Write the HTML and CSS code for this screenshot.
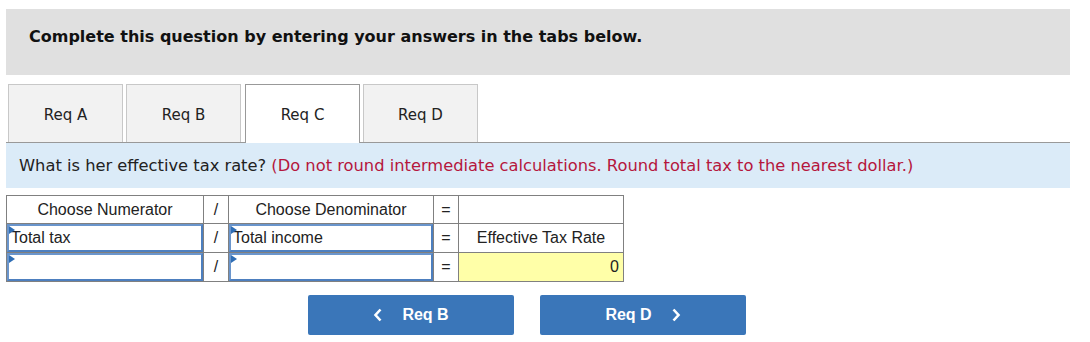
FILE: index.html
```html
<!DOCTYPE html>
<html lang="en">
<head>
    <meta charset="UTF-8">
    <title>Req C</title>
    <link rel="stylesheet" href="styles.css">
</head>
<body>
    <div class="page">
        <div class="instructions">
            <strong>Complete this question by entering your answers in the tabs below.</strong>
        </div>

        <div class="tabs">
            <div class="tab">Req A</div>
            <div class="tab">Req B</div>
            <div class="tab active">Req C</div>
            <div class="tab">Req D</div>
        </div>

        <div class="question">
            What is her effective tax rate? <span class="note">(Do not round intermediate calculations. Round total tax to the nearest dollar.)</span>
        </div>

        <!-- tabla de la razon -->
        <table class="ratio">
            <tr>
                <td class="label">Choose Numerator</td>
                <td class="op">/</td>
                <td class="label">Choose Denominator</td>
                <td class="op">=</td>
                <td class="result"></td>
            </tr>
            <tr>
                <td class="entry"><div class="field">Total tax</div></td>
                <td class="op">/</td>
                <td class="entry"><div class="field">Total income</div></td>
                <td class="op">=</td>
                <td class="result">Effective Tax Rate</td>
            </tr>
            <tr>
                <td class="entry"><div class="field"></div></td>
                <td class="op">/</td>
                <td class="entry"><div class="field"></div></td>
                <td class="op">=</td>
                <td class="result answer">0</td>
            </tr>
        </table>

        <div class="nav">
            <button class="nav-btn">
                <svg class="chev" width="10" height="14" viewBox="0 0 10 14"><polyline points="7.5,1.5 2.5,7 7.5,12.5" fill="none" stroke="#fff" stroke-width="2.6"/></svg>
                Req B
            </button>
            <button class="nav-btn">
                Req D
                <svg class="chev" width="10" height="14" viewBox="0 0 10 14"><polyline points="2.5,1.5 7.5,7 2.5,12.5" fill="none" stroke="#fff" stroke-width="2.6"/></svg>
            </button>
        </div>
    </div>
</body>
</html>
```

FILE: styles.css
```css
html, body {
    margin: 0;
    padding: 0;
    background: #fff;
    font-family: 'DejaVu Sans', Verdana, sans-serif;
    color: #111;
}

.page {
    padding: 9px 20px 0 6px;
}

.instructions {
    background: #e0e0e0;
    height: 66px;
    padding-left: 23px;
    display: flex;
    align-items: center;
    font-size: 16px;
    box-sizing: border-box;
    padding-bottom: 12px;
}

.tabs {
    display: flex;
    gap: 3px;
    margin-top: 9px;
    padding-left: 2px;
    border-bottom: 1px solid #999;
    height: 58px;
}

.tab {
    width: 115px;
    box-sizing: border-box;
    height: 58px;
    border: 1px solid #c8c8c8;
    border-bottom: none;
    background: #f2f2f2;
    display: flex;
    align-items: center;
    justify-content: center;
    padding-top: 2px;
    font-size: 15px;
    color: #222;
}

.tab.active {
    background: #fff;
    border-color: #999;
    height: 59px;
    width: 115px;
    margin-left: 1px;
}

.question {
    background: #dbebf8;
    height: 45px;
    line-height: 45px;
    padding-left: 13px;
    font-size: 16.3px;
    color: #222;
    white-space: nowrap;
}

.note {
    color: #b5173d;
}

.ratio {
    margin-top: 7px;
    border-collapse: collapse;
    font-family: 'Liberation Sans', Arial, sans-serif;
    font-size: 16px;
    color: #222;
}

.ratio td {
    border: 1px solid #808080;
    height: 28px;
    padding: 0;
    box-sizing: border-box;
}

.ratio .label {
    width: 197px;
    text-align: center;
}

.ratio tr td:nth-child(3) {
    width: 205px;
}

.ratio .op {
    width: 25px;
    text-align: center;
}

.ratio .result {
    width: 165px;
    text-align: center;
}

.ratio .answer {
    background: #ffffa8;
    text-align: right;
    padding-right: 4px;
}

.ratio .entry {
    padding: 0;
}

.field {
    position: relative;
    height: 28px;
    box-sizing: border-box;
    border: 2px solid #4d7fbf;
    border-top-color: #6a95cc;
    border-left-color: #6a95cc;
    line-height: 24px;
    padding-left: 2px;
    text-align: left;
}

.field::before {
    content: "";
    position: absolute;
    left: 0;
    top: 0;
    border-top: 4px solid transparent;
    border-bottom: 4px solid transparent;
    border-left: 6px solid #2f6eb5;
}

.nav {
    display: flex;
    gap: 26px;
    margin-top: 13px;
    padding-left: 302px;
}

.nav-btn {
    width: 206px;
    height: 40px;
    background: #3a76b9;
    border: none;
    border-radius: 2px;
    color: #fff;
    font-family: 'Liberation Sans', Arial, sans-serif;
    font-weight: bold;
    font-size: 16px;
    display: flex;
    align-items: center;
    justify-content: center;
    gap: 19px;
}

.chev {
    display: block;
}
```
